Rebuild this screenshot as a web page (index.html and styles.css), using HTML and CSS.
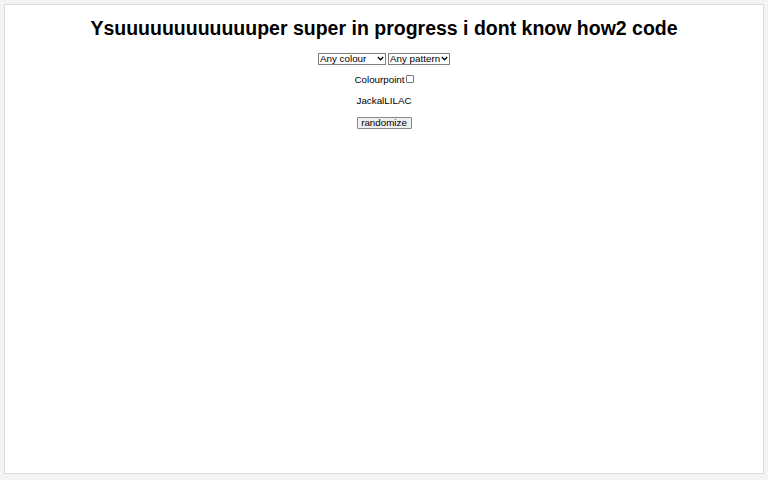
FILE: index.html
```html
<!DOCTYPE html>
<html>
<head>
<meta charset="utf-8">
<link rel="stylesheet" href="styles.css">
</head>
<body>
<div class="panel">
  <h1 class="title">Ysuuuuuuuuuuuuper super in progress i dont know how2 code</h1>
  <div class="row row-selects">
    <select class="sel sel-colour"><option>Any colour</option></select>
    <select class="sel sel-pattern"><option>Any pattern</option></select>
  </div>
  <div class="row row-check">
    <label class="lbl">Colourpoint<input type="checkbox" class="chk"></label>
  </div>
  <div class="row row-result">JackalLILAC</div>
  <div class="row row-btn">
    <button class="btn">randomize</button>
  </div>
</div>
</body>
</html>
```
FILE: styles.css
```css
html, body {
  margin: 0;
  padding: 0;
  background: #f3f3f3;
  font-family: "Liberation Sans", Arial, sans-serif;
}
.panel {
  margin: 4px 4px 5px 4px;
  height: 468px;
  background: #fff;
  border: 1px solid #dcdcdc;
  font-size: 9.8px;
  color: #000;
}
.title {
  font-size: 19.5px;
  font-weight: bold;
  text-align: center;
  line-height: 22px;
  margin: 12px 0 0;
}
.row {
  display: flex;
  justify-content: center;
  align-items: center;
}
.row-selects { height: 13px; margin-top: 13px; gap: 2px; }
.row-check { height: 12px; margin-top: 8px; }
.row-result { height: 12px; margin-top: 9px; }
.row-btn { height: 12px; margin-top: 11px; }
.sel {
  -webkit-appearance: none;
  appearance: none;
  font-family: "Liberation Sans", Arial, sans-serif;
  font-size: 9.8px;
  color: #000;
  height: 12px;
  line-height: 10px;
  padding: 0 8px 0 1px;
  border: 1px solid #808080;
  border-radius: 0;
  background: #fff url("data:image/svg+xml;utf8,<svg xmlns='http://www.w3.org/2000/svg' width='7' height='5' viewBox='0 0 7 5'><path d='M0.8 1 L3.5 3.8 L6.2 1' fill='none' stroke='black' stroke-width='1.3'/></svg>") no-repeat right 1px center;
}
.sel-colour { width: 68px; }
.sel-pattern { width: 62px; }
.lbl { display: inline-flex; align-items: center; }
.chk {
  -webkit-appearance: none;
  appearance: none;
  margin: 0 0 0 1px;
  width: 8px;
  height: 8px;
  border: 1px solid #777;
  border-radius: 1px;
  background: #fff;
}
.btn {
  font-family: "Liberation Sans", Arial, sans-serif;
  font-size: 9.8px;
  color: #000;
  width: 55px;
  height: 12px;
  line-height: 10px;
  padding: 0;
  border: 1px solid #8a8a8a;
  border-radius: 1px;
  background: #efefef;
}
```
